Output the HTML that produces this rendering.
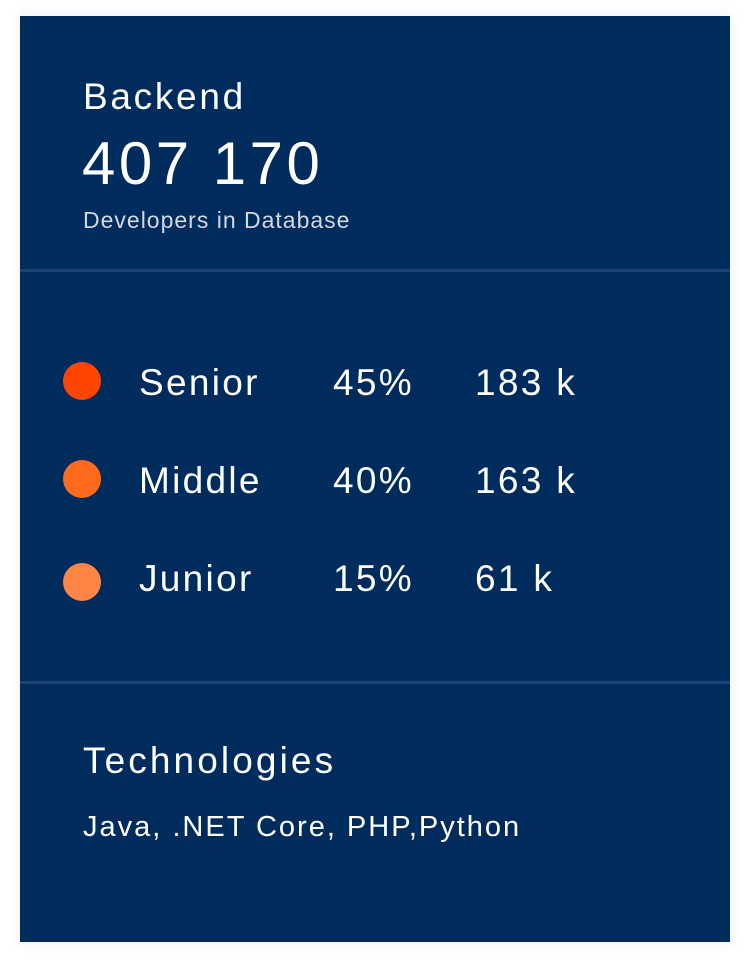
<!DOCTYPE html>
<html><head><meta charset="utf-8"><style>
body{margin:0;width:750px;height:966px;background:#fff;font-family:"Liberation Sans",sans-serif;color:#fff;overflow:hidden}
.card{position:absolute;left:20px;top:16px;width:710px;height:926px;background:#002C5D;box-shadow:0 0 12px rgba(0,0,0,.08)}
.t{position:absolute;white-space:nowrap;line-height:1}
.r{font-size:37px;letter-spacing:2.3px}
.hr{position:absolute;left:0;width:710px;height:3px;background:#1C4371}
.dot{position:absolute;left:43px;width:38px;height:38px;border-radius:50%}
</style></head><body>
<div class="card">
<div class="t" style="left:63px;top:62px;font-size:37px;letter-spacing:2.7px">Backend</div>
<div class="t" style="left:62px;top:118px;font-size:60px;letter-spacing:3.5px">407 170</div>
<div class="t" style="left:63px;top:193px;font-size:23px;letter-spacing:1px;color:#D2D8E2">Developers in Database</div>
<div class="hr" style="top:253px"></div>
<div class="dot" style="top:346px;background:#FF4500"></div>
<div class="dot" style="top:444px;background:#FF6A1D"></div>
<div class="dot" style="top:547px;background:#FF8544"></div>
<div class="t r" style="left:119px;top:348px">Senior</div>
<div class="t r" style="left:313px;top:348px">45%</div>
<div class="t r" style="left:455px;top:348px">183 k</div>
<div class="t r" style="left:119px;top:446px">Middle</div>
<div class="t r" style="left:313px;top:446px">40%</div>
<div class="t r" style="left:455px;top:446px">163 k</div>
<div class="t r" style="left:119px;top:544px">Junior</div>
<div class="t r" style="left:313px;top:544px">15%</div>
<div class="t r" style="left:455px;top:544px">61 k</div>
<div class="hr" style="top:665px"></div>
<div class="t" style="left:63px;top:726px;font-size:37px;letter-spacing:3.1px">Technologies</div>
<div class="t" style="left:63px;top:797px;font-size:29px;letter-spacing:2px">Java, .NET Core, PHP,Python</div>
</div>
</body></html>
